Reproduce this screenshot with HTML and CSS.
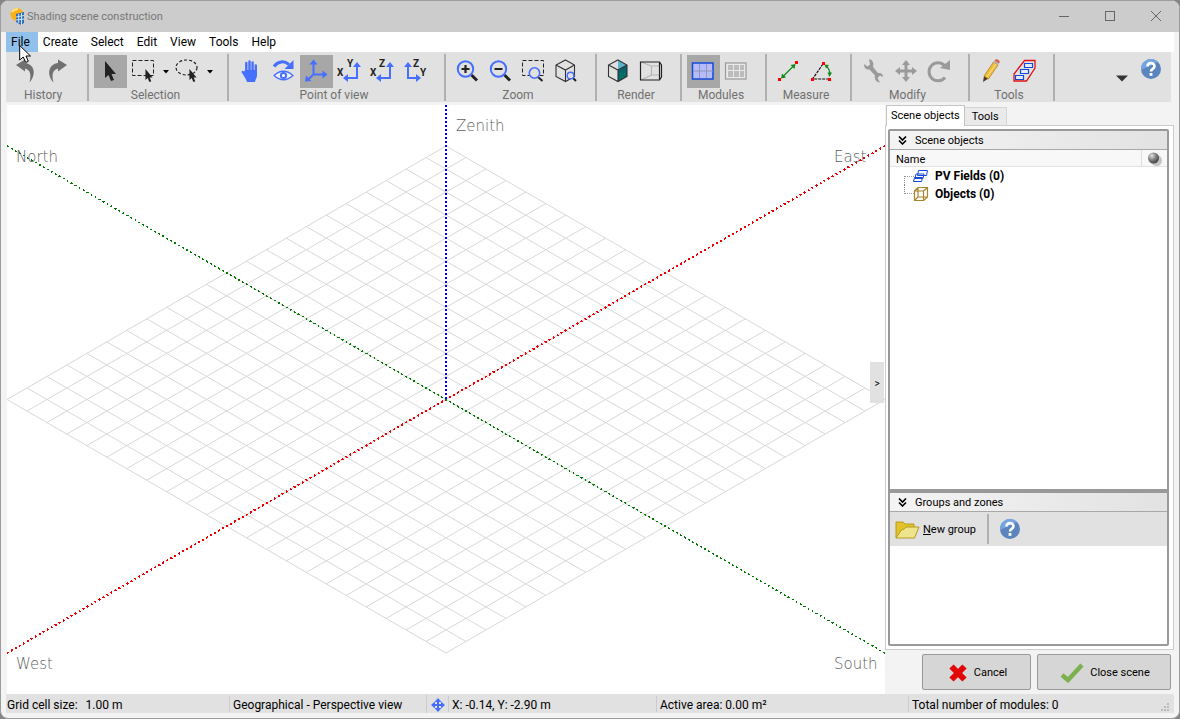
FILE: index.html
```html
<!DOCTYPE html>
<html lang="en">
<head>
  <meta charset="UTF-8">
  <title>Shading scene construction</title>
  <link rel="stylesheet" href="styles.css">
</head>
<body>
  <!-- shared shapes -->
  <svg class="defs" width="0" height="0" aria-hidden="true">
    <defs>
      <symbol id="help" viewBox="0 0 20 20">
        <circle cx="10" cy="10" r="10" fill="#5b86bd"/>
        <path d="M0 11A10 10 0 0 1 17 3Z" fill="#74a5dc"/>
        <path d="M6.500 7.500C6.500 3 13.500 3 13.500 7.300C13.500 10 10 9.800 10 12.500" fill="none" stroke="#fff" stroke-width="2.600"/>
        <rect x="8.600" y="14" width="2.800" height="2.800" fill="#fff"/>
      </symbol>
      <symbol id="chevrons" viewBox="0 0 9 9">
        <path d="M1 .5L4.500 4L8 .5M1 4.500L4.500 8L8 4.500" fill="none" stroke="#000" stroke-width="1.600"/>
      </symbol>
      <symbol id="move" viewBox="0 0 24 24">
        <path d="M12 1L16 6H13.500V10.500H18V8L23 12L18 16V13.500H13.500V18H16L12 23L8 18H10.500V13.500H6V16L1 12L6 8V10.500H10.500V6H8Z" fill="currentColor"/>
      </symbol>
      <symbol id="move-small" viewBox="0 0 16 16">
        <path d="M8 1L11.500 5H9V7H11V4.500L15 8L11 11.500V9H9V11H11.500L8 15L4.500 11H7V9H5V11.500L1 8L5 4.500V7H7V5H4.500Z" fill="currentColor"/>
      </symbol>
      <symbol id="pointer" viewBox="0 0 11 20">
        <path d="M0 0V17L3.500 14L6 20L9 19L6.500 13H11Z" fill="#222"/>
      </symbol>
    </defs>
  </svg>

  <div class="window">
    <header class="titlebar">
      <svg class="app-icon" viewBox="0 0 16 18">
        <circle cx="7" cy="6.500" r="6.500" fill="#fbb116"/>
        <path d="M2 4Q4 1 8 1" stroke="#ffe27a" stroke-width="2" fill="none"/>
        <path d="M6 6L14 4V15L11 17L6 14Z" fill="#2f6fb5"/>
        <path d="M6 9L14 7.500M6 12L14 11M8.700 6V15M11.500 5V17" stroke="#cde3f5" stroke-width="1"/>
      </svg>
      <span class="title">Shading scene construction</span>
      <div class="window-buttons">
        <button aria-label="Minimize"><svg viewBox="0 0 12 12"><path d="M1 5.500H11"/></svg></button>
        <button aria-label="Maximize"><svg viewBox="0 0 12 12"><rect x="1.500" y=".5" width="9" height="9"/></svg></button>
        <button aria-label="Close"><svg viewBox="0 0 12 12"><path d="M1 0L11 10M11 0L1 10"/></svg></button>
      </div>
    </header>

    <nav class="menubar">
      <button class="active">File</button>
      <button>Create</button>
      <button>Select</button>
      <button>Edit</button>
      <button>View</button>
      <button>Tools</button>
      <button>Help</button>
    </nav>

    <div class="toolbar">
      <section class="group first">
        <div class="tools">
          <button class="tool" aria-label="Undo"><svg viewBox="0 0 24 24"><path d="M3 6L12 .5V4C21 5 24 15 16.500 23.500C18.500 16 17.500 11 12 9.500V12.500Z" fill="#707070"/></svg></button>
          <button class="tool" aria-label="Redo"><svg viewBox="0 0 24 24"><path d="M21 6L12 .5V4C3 5 0 15 7.500 23.500C5.500 16 6.500 11 12 9.500V12.500Z" fill="#707070"/></svg></button>
        </div>
        <span class="label">History</span>
      </section>

      <section class="group">
        <div class="tools">
          <button class="tool on" aria-label="Pointer"><svg viewBox="0 0 24 24"><use href="#pointer" x="7" y="2" width="11" height="20"/></svg></button>
          <button class="tool" aria-label="Rectangle selection"><svg viewBox="0 0 24 24"><path d="M1.500 1.500H22.500V16.500H1.500Z" fill="none" stroke="#222" stroke-dasharray="4 2"/><use href="#pointer" x="14" y="10" width="8" height="13"/></svg></button>
          <button class="drop" aria-label="Rectangle options"><svg viewBox="0 0 6 4"><path d="M0 0H6L3 3.500Z"/></svg></button>
          <button class="tool" aria-label="Lasso selection"><svg viewBox="0 0 24 24"><ellipse cx="11.500" cy="8.500" rx="10.500" ry="7.500" fill="none" stroke="#222" stroke-width="1.200" stroke-dasharray="3 2"/><use href="#pointer" x="14" y="10" width="8" height="13"/></svg></button>
          <button class="drop" aria-label="Lasso options"><svg viewBox="0 0 6 4"><path d="M0 0H6L3 3.500Z"/></svg></button>
        </div>
        <span class="label">Selection</span>
      </section>

      <section class="group">
        <div class="tools blue">
          <button class="tool" aria-label="Pan"><svg viewBox="0 0 24 24"><path d="M8.300 4V13M11.500 2.500V12M14.600 3.500V12M17.800 6.500V14M4.800 13L8 17" fill="none" stroke="currentColor" stroke-width="2.400" stroke-linecap="round"/><path d="M7 11H19V16C19 19 17.500 20 17 23H9C8.500 20 6 18 5 15Z" fill="currentColor"/></svg></button>
          <button class="tool" aria-label="Orbit"><svg viewBox="0 0 24 24"><path d="M3 7.500C7 2 13 1.500 18 5.500" fill="none" stroke="currentColor" stroke-width="3"/><path d="M22.500 1V10H13.500Z" fill="currentColor"/><path d="M3 16.500Q12.500 8 22 16.500Q12.500 25 3 16.500Z" fill="#eee" stroke="currentColor" stroke-width="1.200"/><circle cx="12.500" cy="16.500" r="2.600" fill="#fff" stroke="currentColor" stroke-width="2"/></svg></button>
          <button class="tool on" aria-label="Perspective view"><svg viewBox="0 0 24 24"><path d="M9.500 4V15.500H20M9.500 15.500L4 20.500" fill="none" stroke="currentColor" stroke-width="2"/><path d="M5.500 5.500L9.500 .5L13.500 5.500ZM18.500 11.500L23.500 15.500L18.500 19.500ZM1 22.500L2 16.500L7.500 22Z" fill="currentColor"/></svg></button>
          <button class="tool" aria-label="View XY"><svg viewBox="0 0 24 24"><path d="M20 6V19H9" fill="none" stroke="currentColor" stroke-width="2"/><path d="M16 8L20 3L24 8ZM11 15L6 19L11 23Z" fill="currentColor"/><text x="0" y="17">X</text><text x="10" y="8">Y</text></svg></button>
          <button class="tool" aria-label="View XZ"><svg viewBox="0 0 24 24"><path d="M20 6V19H9" fill="none" stroke="currentColor" stroke-width="2"/><path d="M16 8L20 3L24 8ZM11 15L6 19L11 23Z" fill="currentColor"/><text x="0" y="17">X</text><text x="9" y="8">Z</text></svg></button>
          <button class="tool" aria-label="View ZY"><svg viewBox="0 0 24 24"><path d="M5 6V19H14" fill="none" stroke="currentColor" stroke-width="2"/><path d="M1 8L5 3L9 8ZM13 15L18 19L13 23Z" fill="currentColor"/><text x="10" y="8">Z</text><text x="17" y="17">Y</text></svg></button>
        </div>
        <span class="label">Point of view</span>
      </section>

      <section class="group">
        <div class="tools blue">
          <button class="tool" aria-label="Zoom in"><svg viewBox="0 0 24 24"><path d="M16.500 16L22 21.500" stroke="#222" stroke-width="3"/><circle cx="10.500" cy="10" r="7.700" fill="none" stroke="currentColor" stroke-width="2"/><path d="M6.500 10H14.500M10.500 6V14" stroke="#222" stroke-width="2.200"/></svg></button>
          <button class="tool" aria-label="Zoom out"><svg viewBox="0 0 24 24"><path d="M16.500 16L22 21.500" stroke="#222" stroke-width="3"/><circle cx="10.500" cy="10" r="7.700" fill="none" stroke="currentColor" stroke-width="2"/><path d="M6.500 10H14.500" stroke="#222" stroke-width="2.200"/></svg></button>
          <button class="tool" aria-label="Zoom to rectangle"><svg viewBox="0 0 24 24"><path d="M1.500 1.500H22.500V16.500H1.500Z" fill="none" stroke="#222" stroke-dasharray="4 2"/><path d="M17 18L21.500 22" stroke="#222" stroke-width="2"/><circle cx="13.500" cy="14" r="5.200" fill="#e1e1e1" stroke="currentColor" stroke-width="1.600"/></svg></button>
          <button class="tool" aria-label="Zoom to scene"><svg viewBox="0 0 24 24"><path d="M11.500 1L20.500 6V17.500L11.500 22.500L2 17.500V6ZM2 6L11.500 11L20.500 6M11.500 11V22.500" fill="none" stroke="#333" stroke-width="1.100"/><path d="M19 19L22 22" stroke="#222" stroke-width="2"/><circle cx="16.500" cy="16.500" r="3.300" fill="#e1e1e1" stroke="currentColor" stroke-width="1.400"/></svg></button>
        </div>
        <span class="label">Zoom</span>
      </section>

      <section class="group">
        <div class="tools">
          <button class="tool" aria-label="Realistic view"><svg viewBox="0 0 24 24"><path d="M12 1L21 6L12 11Z" fill="#5db4cd"/><path d="M12 11L21 6V17.500L12 22.500Z" fill="#06646b"/><path d="M12 1L21 6V17.500L12 22.500L2.500 17.500V6ZM2.500 6L12 11L21 6M12 11V22.500" fill="none" stroke="#333" stroke-width="1.100"/><path d="M14 15H19M14 18H17" stroke="#159c57" stroke-dasharray="1 1"/></svg></button>
          <button class="tool" aria-label="Technical view"><svg viewBox="0 0 24 24"><path d="M2 3L12.500 7H20M12.500 7V16H20M12.500 16L2 21" fill="none" stroke="#b4b4b4" stroke-width="1.200"/><path d="M1.500 3H20.500V21H1.500ZM20.500 3L22.500 6V18L20.500 21" fill="none" stroke="#222" stroke-width="1.200"/></svg></button>
        </div>
        <span class="label">Render</span>
      </section>

      <section class="group">
        <div class="tools">
          <button class="tool on" aria-label="Show tables"><svg viewBox="0 0 24 24"><rect x="1.500" y="4" width="20.500" height="16" fill="#b6bbfa" stroke="#1549d8" stroke-width="1.500"/><path d="M2 12H22M8.500 5V19M15.500 5V19" stroke="#8f96b5"/></svg></button>
          <button class="tool" aria-label="Show modules"><svg viewBox="0 0 24 24"><rect x="1.500" y="4" width="20.500" height="16" fill="#e8e8e8" stroke="#999" stroke-width="1.200"/><path d="M4 6H9V11H4ZM10 6H15V11H10ZM16 6H20V11H16ZM4 12H9V18H4ZM10 12H15V18H10ZM16 12H20V18H16Z" fill="#bcbcbc"/></svg></button>
        </div>
        <span class="label">Modules</span>
      </section>

      <section class="group">
        <div class="tools">
          <button class="tool" aria-label="Measure distance"><svg viewBox="0 0 24 24"><path d="M7 17.500L17.500 7" stroke="#138a1c" stroke-width="1.300"/><path d="M5 19.500L6 14.500L10 18.500ZM19.500 5L18.500 10L14.500 6Z" fill="#138a1c"/><path d="M19 2H22V5H19ZM2 19H5V22H2Z" fill="#f00"/></svg></button>
          <button class="tool" aria-label="Measure angle"><svg viewBox="0 0 24 24"><path d="M14 5L3.500 20H20" fill="none" stroke="#111" stroke-width="1.200" stroke-dasharray="3 1"/><path d="M17 7Q21 10 21 16" fill="none" stroke="#138a1c" stroke-width="1.300"/><path d="M15.500 5.500L20 6L17 9.500ZM18.500 13.500H23L20.500 18Z" fill="#138a1c"/><path d="M13 3H16V6H13ZM2 19H5V22H2ZM19 19H22V22H19Z" fill="#f00"/></svg></button>
        </div>
        <span class="label">Measure</span>
      </section>

      <section class="group">
        <div class="tools gray">
          <button class="tool" aria-label="Properties"><svg viewBox="0 0 24 24"><path d="M8 0C12 1 13 4 12 8L17 14C20 13.500 22 15 22 18L19 16.500L16.500 19L19 23.500C15 23 13 20 14 16.500L8.500 10.500C5 11 3 9 3 5L6.500 7.500L9 5.500Z" fill="currentColor"/></svg></button>
          <button class="tool" aria-label="Move"><svg viewBox="0 0 24 24"><use href="#move"/></svg></button>
          <button class="tool" aria-label="Rotate"><svg viewBox="0 0 24 24"><path d="M17.500 6.500A9 9 0 1 0 18 18.500" fill="none" stroke="currentColor" stroke-width="3"/><path d="M23 1V11L13 9Z" fill="currentColor"/></svg></button>
        </div>
        <span class="label">Modify</span>
      </section>

      <section class="group">
        <div class="tools">
          <button class="tool" aria-label="Edit"><svg viewBox="0 0 24 24"><path d="M4 23L5 17L9.500 19.500Z" fill="#4d3a20"/><path d="M5 17L14.500 3L19 6L9.500 20Z" fill="#efbd3c" stroke="#a87c20" stroke-width=".7"/><path d="M8 18L17 5" stroke="#ffe287"/><path d="M14.500 3L15.500 1.500L20 4.500L19 6Z" fill="#aeb6bd"/><path d="M15.500 1.500Q17 -.5 19.500 1Q21.500 2.500 20 4.500Z" fill="#dc5c45"/></svg></button>
          <button class="tool" aria-label="Arrange fields"><svg viewBox="0 0 24 24"><path d="M12.500 1.500H23V9L14.500 22H2V15Z" fill="none" stroke="#e01212" stroke-width="1.300"/><path d="M12.500 4.500H20.500V8.500H12.500ZM8.500 10.500H16.500V14.500H8.500ZM3.500 16.500H11.500V20.500H3.500Z" fill="#e6ecf8" stroke="#1549d8" stroke-width="1.200"/></svg></button>
        </div>
        <span class="label">Tools</span>
      </section>

      <div class="toolbar-end">
        <button class="more" aria-label="More"><svg viewBox="0 0 12 7"><path d="M0 .5H12L6 6.500Z" fill="#333"/></svg></button>
        <button class="help" aria-label="Help"><svg><use href="#help"/></svg></button>
      </div>
    </div>

    <main class="content">
      <div class="scene">
        <svg class="view" viewBox="0 0 878 589" preserveAspectRatio="xMidYMid slice">
          <path id="grid" class="grid"/>
          <path class="axis red" d="M0 548L878 41"/>
          <path class="axis green" d="M0 41L878 548"/>
          <path class="axis zenith" d="M439 0V295"/>
          <text x="449" y="26">Zenith</text>
          <text x="9" y="57">North</text>
          <text x="827" y="57">East</text>
          <text x="9" y="564">West</text>
          <text x="827" y="564">South</text>
        </svg>
        <button class="collapse">&gt;</button>
      </div>

      <aside class="side">
        <div class="tabs" role="tablist">
          <button class="tab selected" role="tab">Scene objects</button>
          <button class="tab" role="tab">Tools</button>
        </div>
        <div class="tab-page">
          <div class="panels">
            <section class="panel objects">
              <h2><svg><use href="#chevrons"/></svg>Scene objects</h2>
              <div class="columns">
                <span>Name</span>
                <svg class="ball" viewBox="0 0 16 16">
                  <defs><radialGradient id="shade" cx=".35" cy=".3" r=".7"><stop offset="0" stop-color="#e4e4e4"/><stop offset=".5" stop-color="#888"/><stop offset="1" stop-color="#444"/></radialGradient></defs>
                  <circle cx="10" cy="10.500" r="5.500" fill="#c4c4c4"/><circle cx="7" cy="8" r="5.500" fill="url(#shade)"/>
                </svg>
              </div>
              <ul class="tree">
                <li><svg viewBox="0 0 16 16"><path d="M5.500 2.500H14.500L13.500 7.500H4.500ZM3 6H11L10 10.500H2ZM1.500 9.500H9.500L8.500 13.500H.5Z" fill="#fff" stroke="#1549d8" stroke-width="1"/></svg>PV Fields (0)</li>
                <li><svg viewBox="0 0 16 16"><path d="M1.500 5H10.500V14.500H1.500ZM5 1.500H14.500V11H5ZM1.500 5L5 1.500M10.500 5L14.500 1.500M10.500 14.500L14.500 11M1.500 14.500L5 11" fill="none" stroke="#a8842c" stroke-width="1.200"/></svg>Objects (0)</li>
              </ul>
            </section>
            <section class="panel groups">
              <h2><svg><use href="#chevrons"/></svg>Groups and zones</h2>
              <div class="group-bar">
                <button class="new-group">
                  <svg viewBox="0 0 25 18"><path d="M1 17V1H8L10 3H19V7" fill="#e3c22c" stroke="#b59a1c"/><path d="M1 17L6.500 9L9 8L11 6H24L19.500 17Z" fill="#efe48e" stroke="#b59a1c"/></svg>
                  <span><u>N</u>ew group</span>
                </button>
                <button class="help" aria-label="Help"><svg><use href="#help"/></svg></button>
              </div>
            </section>
          </div>
        </div>
        <div class="actions">
          <button class="action cancel"><svg viewBox="0 0 20 20"><path d="M3.500 3.500L16.500 16.500M16.500 3.500L3.500 16.500" stroke="#e30606" stroke-width="6"/></svg>Cancel</button>
          <button class="action close"><svg viewBox="0 0 24 20"><path d="M2 12L8 17L22 2" fill="none" stroke="#7db04e" stroke-width="4.500"/></svg>Close scene</button>
        </div>
      </aside>
    </main>

    <footer class="statusbar">
      <span class="cell-grid">Grid cell size:<b>1.00 m</b></span>
      <span class="cell-view">Geographical - Perspective view</span>
      <span class="cell-move"><svg><use href="#move-small"/></svg></span>
      <span class="cell-pos">X: -0.14, Y: -2.90 m</span>
      <span class="cell-area">Active area: 0.00 m²</span>
      <span class="cell-modules">Total number of modules: 0</span>
      <svg class="grip" viewBox="0 0 9 9"><path d="M6 0H8V2H6ZM3 3H5V5H3ZM6 3H8V5H6ZM0 6H2V8H0ZM3 6H5V8H3ZM6 6H8V8H6Z"/></svg>
    </footer>
  </div>

  <svg class="cursor" viewBox="0 0 13 20"><path d="M.7 1.500V16L4.200 13L6.800 18.500L9.300 17.300L7 12H11.500Z" fill="#fff" stroke="#000"/></svg>
  <script src="scene.js"></script>
</body>
</html>
```

FILE: styles.css
```css
:root {
  --frame: #f3f3f3;
  --bar: #e1e1e1;
  --line: #b0b0b0;
  --blue: #466eff;
  --ui-font: Roboto, "Liberation Sans", sans-serif;
}

* {
  box-sizing: border-box;
}

body {
  margin: 0;
  background: #858585;
  font: 11px/14px var(--ui-font);
  color: #000;
}

button {
  padding: 0;
  border: 0;
  background: none;
  font: inherit;
  color: inherit;
}

svg {
  display: block;
}

.defs {
  position: absolute;
}

.window {
  display: flex;
  flex-direction: column;
  height: 100vh;
  border: 1px solid #9c9c9c;
  border-radius: 8px;
  background: var(--frame);
  overflow: hidden;
}

/* title bar */
.titlebar {
  display: flex;
  align-items: center;
  height: 31px;
  padding-left: 9px;
  background: #ccc;
  color: #777;
}

.app-icon {
  width: 16px;
  height: 18px;
}

.title {
  flex: 1;
  padding: 1px 0 0 1px;
}

.window-buttons {
  display: flex;
}

.window-buttons button {
  display: grid;
  place-items: center;
  width: 46px;
  height: 31px;
}

.window-buttons svg {
  width: 12px;
  height: 12px;
  fill: none;
  stroke: #666;
}

/* menu */
.menubar {
  display: flex;
  height: 20px;
  margin: 0 5px;
  background: #fff;
  font-size: 12px;
}

.menubar button {
  padding: 0 8px 0 5px;
}

.menubar .active {
  background: #91c1eb;
}

/* toolbar */
.toolbar {
  display: flex;
  height: 50px;
  margin: 0 8px 3px 5px;
  padding: 2px 0 1px;
  background: var(--bar);
}

.group {
  padding: 1px 12px 0 5px;
  border-right: 2px solid var(--line);
}

.group.first {
  padding: 1px 12px 0 3px;
}

.tools {
  display: flex;
}

.blue {
  color: var(--blue);
}

.gray {
  color: #9a9a9a;
}

.tool,
.drop {
  display: grid;
  align-items: center;
  width: 33px;
  height: 33px;
}

.tool {
  padding: 0 0 1px 4px;
}

.tool.on {
  background: #a7a7a7;
}

.tool svg {
  width: 24px;
  height: 24px;
  overflow: visible;
}

.tool text {
  font: bold 10px var(--ui-font);
  fill: #222;
}

.drop {
  width: 11px;
  padding-left: 3px;
}

.drop svg {
  width: 6px;
  height: 4px;
}

.label {
  display: block;
  padding-left: 2px;
  font-size: 12px;
  text-align: center;
  color: #707070;
}

.toolbar-end {
  display: flex;
  flex: 1;
  justify-content: flex-end;
  align-items: flex-start;
  gap: 13px;
  padding: 5px 10px 0 0;
}

.more {
  margin-top: 16px;
}

.more svg {
  width: 12px;
  height: 7px;
}

.help svg {
  width: 20px;
  height: 20px;
}

/* 3D view */
.content {
  display: flex;
  flex: 1;
  min-height: 0;
  padding: 0 5px 0 6px;
}

.scene {
  position: relative;
  flex: 1;
  background: #fff;
  overflow: hidden;
}

.view {
  width: 100%;
  height: 100%;
}

.view text {
  font: 200 15px "DejaVu Sans", sans-serif;
  fill: #606060;
}

.grid {
  fill: none;
  stroke: #d8d8d8;
}

.axis {
  fill: none;
  stroke-width: 2;
  stroke-dasharray: 2 2.600;
  shape-rendering: crispEdges;
}

.red {
  stroke: #f00000;
}

.green {
  stroke: #007a00;
  stroke-width: 1.500;
}

.zenith {
  stroke: #0000f0;
  stroke-dasharray: 2 2;
}

.collapse {
  position: absolute;
  right: 1px;
  top: calc(50% - 38px);
  width: 14px;
  height: 41px;
  padding-top: 4px;
  background: var(--bar);
  font-size: 10px;
}

/* side panel */
.side {
  display: flex;
  flex-direction: column;
  width: 289px;
}

.tabs {
  display: flex;
  align-items: flex-end;
  height: 20px;
  padding-left: 1px;
}

.tab {
  height: 18px;
  padding: 0 7px;
  border: 1px solid #d5d5d5;
  border-left: 0;
  border-bottom: 0;
  background: #eaeaea;
}

.tab.selected {
  z-index: 1;
  height: 21px;
  margin-bottom: -1px;
  padding: 0 4px;
  border: 1px solid #c4c4c4;
  border-bottom: 0;
  background: #fff;
}

.tab-page {
  display: flex;
  flex: 1;
  padding: 3px 4px 3px 2px;
  border: 1px solid #ccc;
  background: #fff;
}

.panels {
  display: flex;
  flex: 1;
  flex-direction: column;
  border: 2px solid #999;
  border-radius: 2px;
}

.panel h2 {
  display: flex;
  align-items: center;
  gap: 8px;
  height: 19px;
  margin: 0;
  padding: 1px 0 0 8px;
  border-bottom: 1px solid #a8a8a8;
  background: linear-gradient(90deg, #f4f4f4, #e2e2e2);
  font-size: 11px;
  font-weight: normal;
}

.panel h2 svg {
  width: 9px;
  height: 9px;
}

.objects {
  flex: 1;
  border-bottom: 4px solid #999;
}

.columns {
  display: flex;
  justify-content: space-between;
  align-items: center;
  height: 17px;
  padding-left: 6px;
  border-bottom: 1px solid #e2e2e2;
  background: #f8f8f8;
}

.columns span {
  padding-top: 3px;
}

.ball {
  width: 26px;
  height: 16px;
  border-left: 1px solid #ddd;
}

.tree {
  margin: 0;
  padding: 0 0 0 14px;
  list-style: none;
  font: bold 12px/18px var(--ui-font);
}

.tree li {
  display: flex;
  align-items: center;
  gap: 6px;
  height: 18px;
}

.tree li::before {
  content: "";
  width: 9px;
  height: 18px;
  margin-right: -7px;
  border-left: 1px dotted #888;
  background: repeating-linear-gradient(90deg, #999 0 1px, #fff 1px 2px) center / 100% 1px no-repeat;
}

.tree li:first-child::before {
  height: 9px;
  align-self: flex-end;
  background-position: top;
}

.tree li:last-child::before {
  height: 9px;
  align-self: flex-start;
  background-position: bottom;
}

.tree svg {
  width: 16px;
  height: 16px;
}

.groups {
  height: 151px;
}

.group-bar {
  display: flex;
  align-items: center;
  gap: 11px;
  height: 34px;
  background: var(--bar);
}

.new-group {
  display: flex;
  align-items: center;
  gap: 3px;
  height: 30px;
  padding: 2px 11px 0 5px;
  border-right: 2px solid var(--line);
}

.new-group svg {
  width: 25px;
  height: 18px;
}

.actions {
  display: flex;
  justify-content: flex-end;
  gap: 6px;
  padding: 4px 3px;
}

.action {
  display: flex;
  justify-content: center;
  align-items: center;
  gap: 6px;
  width: 109px;
  height: 36px;
  padding: 2px 0 0 2px;
  border: 1px solid #999;
  border-radius: 2px;
  background: #d6d6d6;
}

.action.close {
  width: 134px;
}

.action svg {
  width: 20px;
  height: 20px;
}

.close svg {
  width: 24px;
}

/* status bar */
.statusbar {
  display: flex;
  align-items: center;
  height: 19px;
  margin: 0 5px 5px;
  background: var(--bar);
  font-size: 12px;
}

.statusbar span {
  padding: 2px 0 0 3px;
  border-left: 1px solid #ccc;
}

.statusbar .cell-grid {
  width: 223px;
  padding-left: 1px;
  border-left: 0;
}

.cell-grid b {
  padding-left: 8px;
  font-weight: normal;
}

.cell-view {
  width: 197px;
}

.cell-move {
  width: 22px;
  color: var(--blue);
}

.cell-move svg {
  width: 16px;
  height: 16px;
}

.cell-pos {
  width: 208px;
}

.cell-area {
  width: 252px;
}

.cell-modules {
  flex: 1;
}

.grip {
  align-self: flex-end;
  width: 9px;
  height: 9px;
  margin: 0 4px 1px;
  fill: #bbb;
}

/* mouse pointer over the menu */
.cursor {
  position: absolute;
  left: 19px;
  top: 44px;
  width: 13px;
  height: 20px;
}
```

FILE: scene.js
```js
// ground grid: 22 x 22 cells seen in perspective
const cells = 22;
const centerX = 439;
const topY = 41;
const halfW = 439;
const halfH = 253.5;
let d = '';

for (let i = 0; i <= cells; i++) {
  const dx = halfW * i / cells;
  const dy = halfH * i / cells;
  d += `M${centerX - dx} ${topY + dy}L${centerX - dx + halfW} ${topY + dy + halfH}`;
  d += `M${centerX + dx} ${topY + dy}L${centerX + dx - halfW} ${topY + dy + halfH}`;
}

document.getElementById('grid').setAttribute('d', d);
```
